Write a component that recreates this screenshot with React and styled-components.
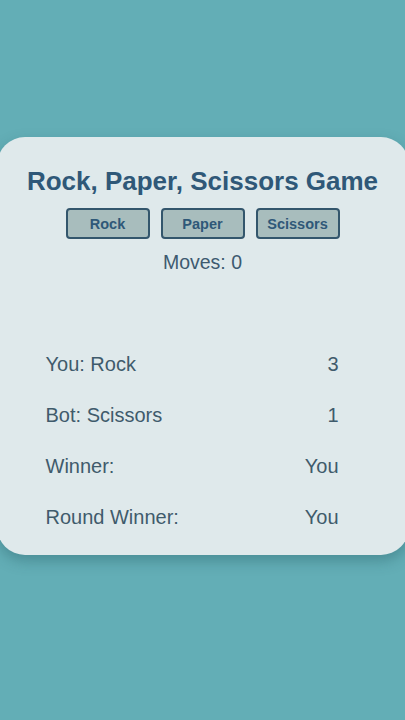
import React from "react";
import styled, { createGlobalStyle } from "styled-components";

const Global = createGlobalStyle`
  html, body { margin: 0; padding: 0; }
  body {
    background: #63aeb6;
    font-family: "Liberation Sans", Arial, sans-serif;
    overflow: hidden;
  }
`;

const Page = styled.div`
  width: 405px;
  height: 720px;
  display: flex;
  align-items: flex-start;
  justify-content: center;
  padding-top: 137px;
  box-sizing: border-box;
`;

const Card = styled.div`
  flex: none;
  width: 412px;
  height: 418px;
  box-sizing: border-box;
  background: #dfe9eb;
  border-radius: 28px;
  box-shadow: 0 6px 14px rgba(30, 80, 90, 0.35);
  display: flex;
  flex-direction: column;
  align-items: center;
  padding-top: 29px;
`;

const Title = styled.h1`
  margin: 0;
  font-size: 26px;
  font-weight: 700;
  color: #2f5878;
  line-height: 30px;
`;

const Buttons = styled.div`
  display: flex;
  gap: 11px;
  margin-top: 12px;
`;

const Button = styled.button`
  width: 84px;
  height: 31px;
  box-sizing: border-box;
  background: #a8bdbd;
  border: 2px solid #33566c;
  border-radius: 4px;
  font-family: "Liberation Sans", Arial, sans-serif;
  font-weight: 700;
  font-size: 14.5px;
  color: #2f5878;
  padding: 0;
`;

const Moves = styled.div`
  margin-top: 11px;
  font-size: 19.5px;
  color: #3d5a70;
  line-height: 24px;
`;

const Table = styled.div`
  margin-top: 78px;
  width: 293px;
  display: flex;
  flex-direction: column;
  gap: 27px;
  align-self: flex-start;
  margin-left: 49px;
`;

const Row = styled.div`
  display: flex;
  justify-content: space-between;
  font-size: 20px;
  line-height: 24px;
  color: #3f5b6c;
`;

const rows = [
  ["You: Rock", "3"],
  ["Bot: Scissors", "1"],
  ["Winner:", "You"],
  ["Round Winner:", "You"],
];

export default function App() {
  return (
    <>
      <Global />
      <Page>
        <Card>
          <Title>Rock, Paper, Scissors Game</Title>
          <Buttons>
            <Button>Rock</Button>
            <Button>Paper</Button>
            <Button>Scissors</Button>
          </Buttons>
          <Moves>Moves: 0</Moves>
          <Table>
            {rows.map(([l, v]) => (
              <Row key={l}>
                <span>{l}</span>
                <span>{v}</span>
              </Row>
            ))}
          </Table>
        </Card>
      </Page>
    </>
  );
}
